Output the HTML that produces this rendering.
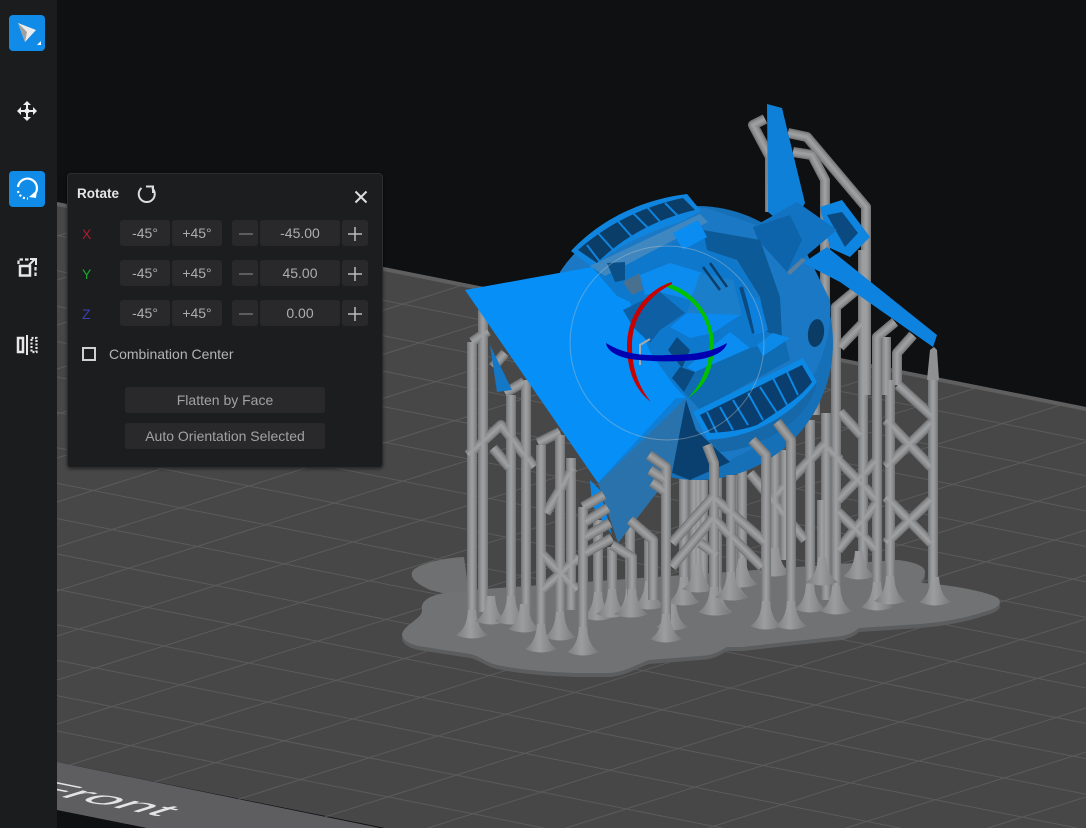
<!DOCTYPE html>
<html><head><meta charset="utf-8"><style>
html,body{margin:0;padding:0;background:#0e1012;width:1086px;height:828px;overflow:hidden}
#r{position:relative;width:1086px;height:828px;overflow:hidden;background:#0e1012;font-family:"Liberation Sans",sans-serif}
svg{position:absolute;left:0;top:0;display:block}
#side{position:absolute;left:0;top:0;width:57px;height:828px;background:#1b1c1e}
.ab{position:absolute;left:9px;width:36px;height:36px;border-radius:4px;background:#108ce8}
#p{position:absolute;left:67px;top:173px;width:314px;height:293px;background:#1c1d1f;border:1px solid #2c2d2f;border-radius:4px;box-shadow:0 1px 3px rgba(0,0,0,.5)}
.b{position:absolute;height:26px;line-height:27px;background:#29292b;border-radius:3px;color:#adadad;font-size:14px;text-align:center}
.l{position:absolute;left:14px;font-size:14px;line-height:28px}
</style></head><body><div id="r">
<svg width="1086" height="828" viewBox="0 0 1086 828">
<defs>
<clipPath id="fl"><polygon points="57,204 1086,409 1086,828 380,828 57,762"/></clipPath>
<linearGradient id="ft" x1="0" x2="1" y1="0" y2="0"><stop offset="0" stop-color="#7c7d7e"/><stop offset=".45" stop-color="#9c9d9e"/><stop offset="1" stop-color="#78797a"/></linearGradient>
<path id="f" d="M-16,1Q-5,-5 -4,-24L4,-24Q5,-5 16,1Q0,8 -16,1Z" fill="url(#ft)"/>
<path id="sb" fill="none" stroke-linecap="butt" stroke-linejoin="round" d="M770,212V157L753,125L765,119M788,133L807,137L866,207V395M793,152L812,155L825,180V245M825,230V300M836,395V307L860,287M863,250V395M840,347L863,323M877,395V337L895,322M886,395V337M897,385V353L913,335M815,370V415
M472,342V628M472,342L488,331M483,310V612M511,395V612M505,393L524,382M526,380V622M541,445V640M538,443L560,432M560,435V630M571,458V610M598,520V610M612,547V607M630,520V605M649,540V600M684,470V595M694,480V590M703,480V592M698,480V582M717,470V600M733,475V590M742,470V578M775,450V565M785,450V560M810,420V600M826,413V600M822,500V575M836,380V602M863,380V568M877,380V598M890,380V592M933,378V592
M468,455L501,425L534,467M493,448L509,467M546,513L573,468M540,552L577,590M542,590L579,557M493,367L505,353
M898,385L933,417M886,420L931,467M931,423L886,467M886,497L931,543M931,500L886,543M838,460L877,500M877,460L838,500M838,512L877,550M877,503L838,550M840,412L861,435M774,497L824,445L840,460M750,473L805,540"/>
<path id="sf" fill="none" stroke-linejoin="round" d="M583,507V643M583,507L604,495M585,522L608,508M585,537L610,523M585,553L612,538M612,545L632,557V605M630,520L653,540V600M649,455L666,467V630M650,470L666,480M652,482L666,492M666,467V630M707,445L714,463V603M752,440L766,455V617M777,422L791,440V617M731,475V590M672,543L713,497L766,543M672,567L713,518L762,567M700,543L717,555"/>
</defs>

<!-- floor -->
<polygon points="57,202 1086,407 1086,828 385,828 57,762" fill="#474747"/>
<g clip-path="url(#fl)" stroke="#5b5b5b" stroke-width="1" fill="none">
<path d="M57,235.400L1086,440.200M57,270.800L1086,475.600M57,306.200L1086,511M57,341.600L1086,546.400M57,377L1086,581.800M57,412.400L1086,617.200M57,447.800L1086,652.600M57,483.200L1086,688M57,518.600L1086,723.400M57,554L1086,758.800M57,589.400L1086,794.200M57,624.800L1077,828M57,660.200L900,828M57,695.600L722,828M57,731L544,828"/>
<path d="M57,236L800,0M57,280L938,0M57,325L1080,0M57,369L1086,42M57,414L1086,87M57,458L1086,131M57,502L1086,175M57,547L1086,220M57,591L1086,264M57,636L1086,309M57,680L1086,353M57,724L1086,397M57,769L1086,442M57,813L1086,486M148,828L1086,530M290,828L1086,575M428,828L1086,619M566,828L1086,663M708,828L1086,708M846,828L1086,752M988,828L1086,797"/>
</g>
<polygon points="57,202 1086,407 1086,411 57,206" fill="#5f5f60"/>
<polygon points="57,762 380,828 147,828 57,810" fill="#5e5e61"/>
<text transform="matrix(1.33,.266,-.9,.28,22,789)" font-size="44" fill="#e4e4e4" font-family="Liberation Sans">Front</text>

<!-- raft -->
<path transform="translate(0,4)" fill="#5c5d5e" d="M402,634C404,625 423,618 422,610C420,600 432,595 445,593L470,590L898,560C915,562 925,566 925,572C925,578 921,580 921,583C935,583 985,590 998,598C1003,604 998,608 984,612C965,618 945,622 920,624L859,628C855,632 850,634 842,636L742,647L727,647C718,652 715,655 700,656L649,660C635,665 625,672 610,673L575,673C550,672 520,670 497,665C485,662 480,656 470,654L425,647C415,646 402,642 402,634Z"/>
<path fill="#6f7071" d="M412,572C415,565 440,558 464,557L470,600L430,590C420,585 410,580 412,572Z"/>
<path fill="#717273" d="M402,634C404,625 423,618 422,610C420,600 432,595 445,593L470,590L898,560C915,562 925,566 925,572C925,578 921,580 921,583C935,583 985,590 998,598C1003,604 998,608 984,612C965,618 945,622 920,624L859,628C855,632 850,634 842,636L742,647L727,647C718,652 715,655 700,656L649,660C635,665 625,672 610,673L575,673C550,672 520,670 497,665C485,662 480,656 470,654L425,647C415,646 402,642 402,634Z"/>

<!-- back supports -->
<use href="#sb" stroke="#77787a" stroke-width="10"/>
<use href="#sb" stroke="#8e8f90" stroke-width="7"/>
<use href="#sb" stroke="#9d9e9f" stroke-width="3"/>
<polygon fill="#8f9091" points="934,347 937,350 939,380 927,380 930,350"/>
<g><use href="#f" x="472" y="634"/><use href="#f" x="491" y="620"/><use href="#f" x="511" y="620"/><use href="#f" x="524" y="628"/><use href="#f" x="560" y="636"/><use href="#f" x="598" y="616"/><use href="#f" x="612" y="613"/><use href="#f" x="630" y="613"/><use href="#f" x="649" y="605"/><use href="#f" x="672" y="626"/><use href="#f" x="684" y="601"/><use href="#f" x="698" y="588"/><use href="#f" x="717" y="611"/><use href="#f" x="733" y="596"/><use href="#f" x="742" y="583"/><use href="#f" x="775" y="572"/><use href="#f" x="810" y="608"/><use href="#f" x="836" y="610"/><use href="#f" x="822" y="581"/><use href="#f" x="859" y="575"/><use href="#f" x="877" y="606"/><use href="#f" x="890" y="600"/><use href="#f" x="935" y="601"/></g>

<!-- model body -->
<ellipse cx="697" cy="343" rx="136" ry="137" fill="#1670b8"/>
<path fill="#1a78c4" d="M560,272C590,225 650,205 707,208L800,240L830,300C835,350 800,420 750,450L692,480L660,430L560,300Z"/>
<!-- top fin -->
<path fill="#0f85e0" d="M571,251C600,220 640,200 687,194L701,211L680,222C640,235 610,250 593,268Z"/>
<path fill="#0a3d68" d="M578,250C605,226 640,207 683,198L695,210C660,218 625,235 597,263Z"/>
<path stroke="#0f85e0" stroke-width="2" fill="none" d="M587,245L600,262M598,233L615,252M617,220L632,237M632,212L650,230M647,207L663,225M665,203L680,218"/>
<!-- right fin -->
<polygon fill="#0e80d8" points="767,104 782,108 805,203 790,230 768,212"/>
<polygon fill="#0e85e0" points="820,207 842,200 870,237 850,257 830,248"/>
<polygon fill="#0a4a80" points="827,215 842,212 858,233 845,247"/>
<polygon fill="#0d82df" points="803,263 827,247 937,335 933,347 840,282"/>
<polygon fill="#1273c2" points="753,227 797,202 837,230 787,272 758,240"/>
<polygon fill="#0e64aa" points="753,227 790,215 802,240 787,272 758,240"/>
<polygon fill="#5a7f9e" points="787,272 802,258 806,260 790,275"/>
<!-- interior base -->
<path fill="#0e78cc" d="M590,268L703,235L745,270L770,330L760,360L690,400L640,360Z"/>
<polygon fill="#0c5a98" points="703,230 760,240 780,297 782,337 767,332 760,297 737,260 707,250"/>
<polygon fill="#3f87c0" points="590,266 700,214 708,222 605,276"/>
<polygon fill="#0a8cf0" points="673,233 698,220 707,237 683,250"/>
<!-- dark under triangle -->
<polygon fill="#0a4070" points="672,473 686,400 696,430 730,462 690,480"/>
<polygon fill="#2a72ac" points="686,394 598,483 618,543 672,473"/>
<polygon fill="#0c86e4" points="590,480 600,490 612,535 592,505"/>
<polygon fill="#1478c9" points="490,345 512,390 497,392"/>
<!-- triangle -->
<polygon fill="#0690f7" points="465,290 592,267 617,296 630,302 650,352 676,388 686,398 598,483"/>
<polygon fill="#0f7ed6" points="686,398 598,483 604,476 676,398"/>
<!-- interior blocks over triangle -->
<polygon fill="#0a4f88" points="607,263 625,262 625,280 615,282"/>
<polygon fill="#4a7090" points="623,282 640,273 643,290 632,295"/>
<polygon fill="#0c8cef" points="640,275 670,263 703,273 690,300 660,292 645,295"/>
<polygon fill="#1b7ecb" points="700,273 733,280 742,315 690,338 687,313"/>
<polygon fill="#0e5fa3" points="623,310 660,292 685,313 660,330 650,343 633,327"/>
<polygon fill="#0a8af0" points="670,327 687,313 740,315 713,333 690,338"/>
<polygon fill="#0a4a80" points="677,337 690,350 682,368 668,350"/>
<polygon fill="#0a8cf0" points="687,367 730,332 750,348 695,372"/>
<polygon fill="#0f6bb2" points="695,372 750,348 785,340 790,360 700,410 684,392"/>
<polygon fill="#0a4a80" points="680,367 695,372 684,392 672,378"/>
<polygon fill="#0c8aea" points="757,345 773,333 790,338 763,356"/>
<path stroke="#0a3d68" stroke-width="2.500" fill="none" d="M703,267L720,290M710,263L727,287"/>
<path stroke="#0a4a80" stroke-width="4" fill="none" d="M741,287L754,333"/>
<polygon fill="#0c80dc" points="745,290 760,300 768,330 755,335"/>
<ellipse cx="816" cy="333" rx="8" ry="14" fill="#0a3c66" transform="rotate(8 816 333)"/>
<!-- lower grille -->
<path fill="#0c88e5" d="M693,412L803,358L817,382C800,405 780,418 760,430C740,437 725,438 708,440Z"/>
<path fill="#1668a8" d="M708,440C750,438 790,418 817,382C810,420 760,450 720,452Z"/>
<path fill="#0a3e6e" d="M700,415L802,365L812,382C800,398 780,410 757,425C740,431 725,432 710,433Z"/>
<path stroke="#0c88e5" stroke-width="2" fill="none" d="M707,412L717,433M720,407L733,430M733,400L748,425M748,393L763,420M760,387L777,413M773,378L787,405M787,372L798,395"/>
<!-- gizmo -->
<circle cx="667" cy="343" r="97" fill="none" stroke="#c8c8c8" stroke-opacity=".4" stroke-width="1"/>
<path fill="none" stroke="#a9a9a9" stroke-width="2" d="M640,365V345L650,339"/>
<path fill="#00c000" d="M666,283C695,290 714,318 714,345C714,370 704,388 688,398C700,386 709,368 710,345C710,320 694,296 666,287Z"/>
<path fill="#c80000" d="M672,282C645,290 627,318 627,345C627,370 635,390 651,402C638,386 632,368 632,345C632,318 648,296 672,284Z"/>
<path fill="#0000b0" d="M606,343C625,355 645,356 668,355C690,355 710,353 727,343C725,352 712,358 695,360C675,362 650,362 630,359C615,356 607,350 606,343Z"/>

<!-- front supports -->
<use href="#sf" stroke="#77787a" stroke-width="10"/>
<use href="#sf" stroke="#8e8f90" stroke-width="7"/>
<use href="#sf" stroke="#9d9e9f" stroke-width="3"/>
<g><use href="#f" x="541" y="648"/><use href="#f" x="583" y="651"/><use href="#f" x="666" y="638"/><use href="#f" x="632" y="613"/><use href="#f" x="714" y="611"/><use href="#f" x="766" y="625"/><use href="#f" x="791" y="625"/><use href="#f" x="731" y="596"/></g>
</svg>

<div id="side">
<div class="ab" style="top:15px"></div>
<div class="ab" style="top:171px"></div>
<svg width="57" height="360" viewBox="0 0 57 360">
<polygon points="18,23 36,30 25,42" fill="#ececec"/><polygon points="18,23 27,32 25,42" fill="#a0a0a0"/>
<polygon points="41,41 41,45 37,45" fill="#fff"/>
<g fill="#eee"><polygon points="27,101 23,105 31,105"/><polygon points="27,121 23,117 31,117"/><polygon points="17,111 21,107 21,115"/><polygon points="37,111 33,107 33,115"/></g>
<path d="M27,104V118M20,111H34" stroke="#eee" stroke-width="2"/><circle cx="27" cy="111" r="2.500" fill="#eee"/>
<path d="M18,187A9.500,9.500 0 1 1 34,195" fill="none" stroke="#fff" stroke-width="2.200"/>
<polygon points="37,190 36,198 29,197" fill="#fff"/>
<path d="M18,191A9.500,9.500 0 0 0 28,198.500" fill="none" stroke="#fff" stroke-width="2.200" stroke-dasharray="2 2.200"/>
<path d="M18.500,264V259.500H29M35.500,267V276" fill="none" stroke="#e6e6e6" stroke-width="2.200" stroke-dasharray="3.500 2"/>
<rect x="20" y="266" width="10" height="9.500" fill="none" stroke="#e6e6e6" stroke-width="2.500"/>
<path d="M29,265L35,259M30,259H36V265" fill="none" stroke="#e6e6e6" stroke-width="2"/>
<rect x="18" y="338" width="5" height="14" fill="none" stroke="#e6e6e6" stroke-width="2.500"/>
<path d="M27,335V355" stroke="#e6e6e6" stroke-width="2"/>
<rect x="31.500" y="338" width="5" height="14" fill="none" stroke="#e6e6e6" stroke-width="2.200" stroke-dasharray="2 1.500"/>
</svg>
</div>

<div id="p">
<div style="position:absolute;left:9px;top:12px;font-size:13.500px;font-weight:bold;color:#e6e6e6">Rotate</div>
<svg width="314" height="60" viewBox="67 173 314 60" style="left:0;top:0">
<path d="M140.500,187A8,8 0 1 0 151,187" fill="none" stroke="#ddd" stroke-width="2"/>
<path d="M145,185.500H152V192" fill="none" stroke="#ddd" stroke-width="2"/>
<path d="M354.500,190.500L365.500,201.500M365.500,190.500L354.500,201.500" stroke="#ddd" stroke-width="2"/>
</svg>
<div class="l" style="top:46px;color:#b01a30">X</div>
<div class="l" style="top:86px;color:#1ba52c">Y</div>
<div class="l" style="top:126px;color:#3b40b5">Z</div>

<div class="b" style="left:52px;top:46px;width:50px">-45°</div><div class="b" style="left:104px;top:46px;width:50px">+45°</div>
<div class="b" style="left:164px;top:46px;width:26px"></div><div class="b" style="left:192px;top:46px;width:80px">-45.00</div><div class="b" style="left:274px;top:46px;width:26px"></div>
<div class="b" style="left:52px;top:86px;width:50px">-45°</div><div class="b" style="left:104px;top:86px;width:50px">+45°</div>
<div class="b" style="left:164px;top:86px;width:26px"></div><div class="b" style="left:192px;top:86px;width:80px">45.00</div><div class="b" style="left:274px;top:86px;width:26px"></div>
<div class="b" style="left:52px;top:126px;width:50px">-45°</div><div class="b" style="left:104px;top:126px;width:50px">+45°</div>
<div class="b" style="left:164px;top:126px;width:26px"></div><div class="b" style="left:192px;top:126px;width:80px">0.00</div><div class="b" style="left:274px;top:126px;width:26px"></div>
<svg width="314" height="170" viewBox="67 173 314 170" style="left:0;top:0">
<path d="M238,233H252M238,273H252M238,313H252" stroke="#6f6f6f" stroke-width="1.500"/>
<path d="M347,233H361M354,226V240M347,273H361M354,266V280M347,313H361M354,306V320" stroke="#bcbcbc" stroke-width="1.500"/>
</svg>
<div style="position:absolute;left:14px;top:173px;width:10px;height:10px;border:2px solid #d0d0d0"></div>
<div style="position:absolute;left:41px;top:171px;font-size:14px;line-height:18px;color:#b4b4b4">Combination Center</div>
<div class="b" style="left:57px;top:213px;width:200px;color:#a2a2a2;font-size:14px">Flatten by Face</div>
<div class="b" style="left:57px;top:249px;width:200px;color:#a2a2a2;font-size:14px">Auto Orientation Selected</div>
</div>
</div></body></html>
